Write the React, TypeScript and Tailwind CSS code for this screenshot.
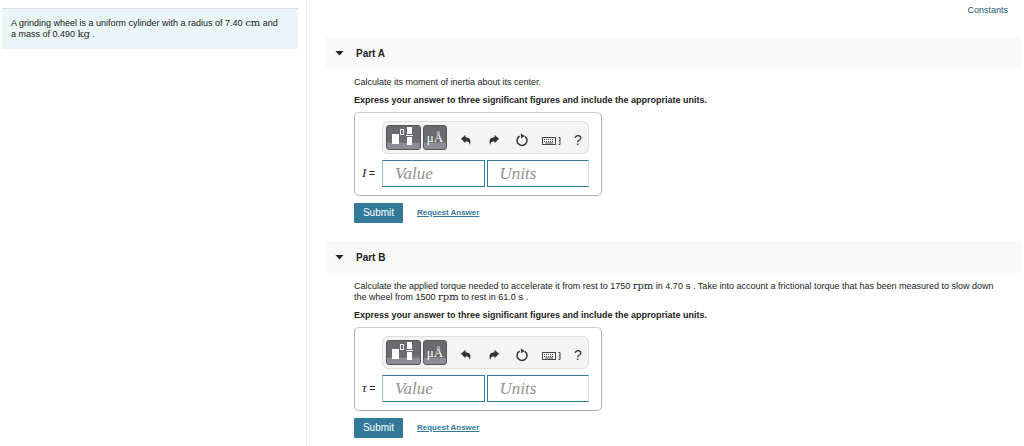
import type { ReactNode } from 'react';

function Unit({ children }: { children: ReactNode }) {
  return <span className="font-['DejaVu_Serif','Liberation_Serif',serif] text-[10px] leading-none">{children}</span>;
}

function TemplatesIcon() {
  return (
    <svg viewBox="0 0 35 25" className="block h-[25px] w-[35px] shrink-0" aria-hidden="true">
      <rect x="6" y="9" width="7" height="10" fill="#fff" />
      <rect x="14.5" y="4.5" width="3" height="5" fill="none" stroke="#eee" />
      <rect x="21" y="2" width="5" height="7" fill="#fff" />
      <rect x="20" y="10" width="7" height="1" fill="#fff" />
      <rect x="21" y="12" width="5" height="8" fill="#fff" />
    </svg>
  );
}

function UndoIcon() {
  return (
    <svg viewBox="0 0 12 12" className="block h-3 w-3" aria-hidden="true">
      <path d="M1 4.800 5.500.8v2.400c3.700.1 6.200 2.200 4.400 7.800-.3-2.500-1.400-3.800-4.400-3.800v2Z" fill="#333" />
    </svg>
  );
}

function RedoIcon() {
  return (
    <svg viewBox="0 0 12 12" className="block h-3 w-3" aria-hidden="true">
      <path d="M11 4.800 6.500.8v2.400c-3.700.1-6.200 2.200-4.400 7.800.3-2.500 1.400-3.800 4.400-3.800v2Z" fill="#333" />
    </svg>
  );
}

function ResetIcon() {
  return (
    <svg viewBox="0 0 14 14" className="block h-3.5 w-3.5" aria-hidden="true">
      <path d="M4.600 3.100A5 5 0 1 0 9.800 3.300" fill="none" stroke="#333" strokeWidth="1.500" />
      <path d="M5.800.6 9.800 2.900 6.200 5.300Z" fill="#333" />
    </svg>
  );
}

function KeyboardIcon() {
  return (
    <svg viewBox="0 0 20 10" className="block h-2.5 w-5 shrink-0" aria-hidden="true">
      <rect x="1.500" y="1.500" width="13" height="7" fill="#f5f5f5" stroke="#444" />
      <path d="M3 3.500h10M3 5.500h10" stroke="#444" strokeDasharray="1 1" />
      <path d="M4 7h8" stroke="#555" />
      <path d="M17.500 1.500h1.500v7h-1.500" fill="none" stroke="#444" />
      <path d="M18 4.500h1" stroke="#444" />
    </svg>
  );
}

const darkButton =
  'h-[25px] shrink-0 rounded-[3px] border border-[#55555a] bg-linear-to-b from-[#6b6b6f] from-70% to-[#8d8d95] to-75% text-white';

const toolButton = 'flex h-5 w-[18px] items-center justify-center';

function Toolbar() {
  return (
    <div className="flex h-[33px] items-center rounded-md border border-[#dedede] bg-[#f4f4f4] pl-[3px]" role="toolbar" aria-label="Answer tools">
      <button type="button" aria-label="Templates" className={`${darkButton} flex w-[35px] items-center justify-center`}>
        <TemplatesIcon />
      </button>
      <button type="button" aria-label="Units" className={`${darkButton} ml-0.5 w-6 font-['Liberation_Serif',serif] text-[13px] leading-6`}>
        μÅ
      </button>
      <div className="flex gap-2.5 pt-1 pl-2.5">
        <button type="button" aria-label="Undo" className={toolButton}><UndoIcon /></button>
        <button type="button" aria-label="Redo" className={toolButton}><RedoIcon /></button>
        <button type="button" aria-label="Reset" className={toolButton}><ResetIcon /></button>
        <button type="button" aria-label="Keyboard shortcuts" className="flex h-5 w-[18px] items-center pt-0.5"><KeyboardIcon /></button>
        <button type="button" aria-label="Help" className={`${toolButton} text-sm text-[#333]`}>?</button>
      </div>
    </div>
  );
}

const field =
  "h-[27px] min-w-0 flex-1 border border-[#34799a] bg-white pl-3 font-['Liberation_Serif',serif] text-[17px] italic text-[#333] outline-none placeholder:text-[#929292]";

interface PartProps {
  name: string;
  symbol: string;
  children: ReactNode;
}

function Part({ name, symbol, children }: PartProps) {
  return (
    <section>
      <h2 className="bg-[#f9f9f9]">
        <button type="button" aria-expanded="true" className="flex h-8 w-full items-center gap-3 pl-[9px] text-[10px] font-bold text-[#222]">
          <svg viewBox="0 0 9 5" className="h-[5px] w-[9px]" aria-hidden="true">
            <path d="M.5 0h8l-4 4.500Z" fill="#222" />
          </svg>
          {name}
        </button>
      </h2>
      <form className="flex flex-col items-start pt-2 pl-7" onSubmit={(e) => e.preventDefault()}>
        <p className="pr-4">{children}</p>
        <p className="mt-[7px] font-bold">Express your answer to three significant figures and include the appropriate units.</p>
        <div className="mt-1.5 flex w-[248px] items-end rounded-[5px] border border-[#b0b0b0] border-t-[#cfcfcf] py-2 pr-3 pl-[7px]">
          <label htmlFor={`value-${name}`} className="w-5 shrink-0 text-[10px] leading-[27px] whitespace-nowrap">
            <span className="font-['Liberation_Serif',serif] text-[13px] italic">{symbol}</span> =
          </label>
          <div className="flex min-w-0 flex-1 flex-col gap-1.5">
            <Toolbar />
            <div className="flex gap-0.5">
              <input id={`value-${name}`} placeholder="Value" className={`${field} border-l-[#9cc4d6]`} />
              <input aria-label="Units" placeholder="Units" className={`${field} border-r-[#c4dde7]`} />
            </div>
          </div>
        </div>
        <div className="mt-[7px] flex items-center gap-3.5">
          <button type="submit" className="h-5 w-[49px] rounded-[1px] bg-[#33799a] pb-0.5 text-[10px] text-white">Submit</button>
          <a href="#request" className="pb-0.5 text-[8px] font-bold text-[#33799a] underline">Request Answer</a>
        </div>
      </form>
    </section>
  );
}

export default function App() {
  return (
    <div className="flex min-h-screen bg-white font-['Liberation_Sans',Arial,sans-serif] text-[9px] leading-[11px] text-[#222]">
      <aside className="w-[307px] shrink-0 border-r border-[#e9e9f0] pt-2 pr-2 pl-0.5">
        <p className="border-t border-[#dcdcdc] bg-[#eaf5f7] py-[9px] pr-4 pl-[9px]">
          A grinding wheel is a uniform cylinder with a radius of 7.40 <Unit>cm</Unit> and a mass of 0.490 <Unit>kg</Unit> .
        </p>
      </aside>
      <main className="min-w-0 flex-1 pr-[3px] pl-[19px]">
        <div className="flex h-[37px] justify-end pt-[5px] pr-[13px]">
          <a href="#constants" className="text-[#1d5a75]">Constants</a>
        </div>
        <div className="flex flex-col gap-[18px]">
          <Part name="Part A" symbol="I">Calculate its moment of inertia about its center.</Part>
          <Part name="Part B" symbol="τ">
            Calculate the applied torque needed to accelerate it from rest to 1750 <Unit>rpm</Unit> in 4.70 <Unit>s</Unit> . Take into account a
            frictional torque that has been measured to slow down the wheel from 1500 <Unit>rpm</Unit> to rest in 61.0 <Unit>s</Unit> .
          </Part>
        </div>
      </main>
    </div>
  );
}
